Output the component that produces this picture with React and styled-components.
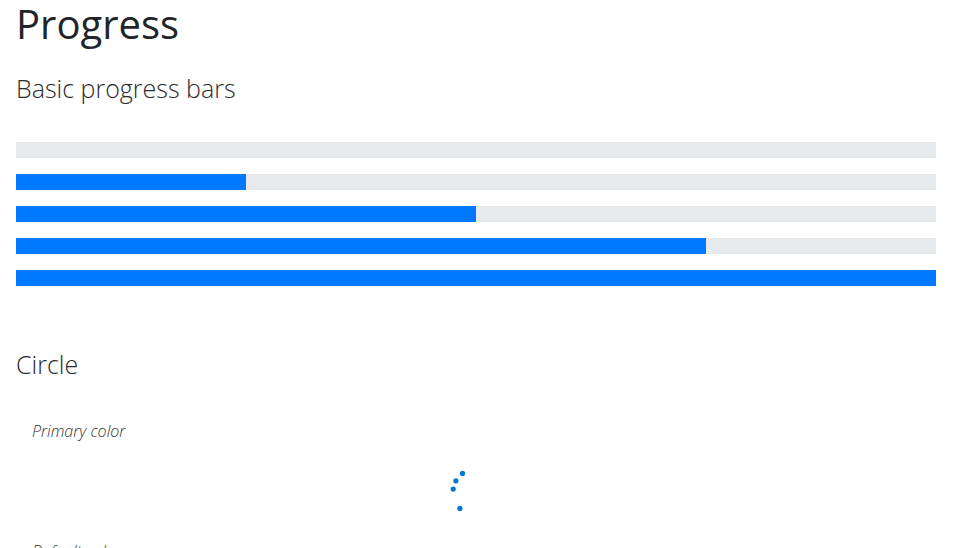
import styled, { createGlobalStyle } from "styled-components";

const GlobalStyle = createGlobalStyle`
  body {
    margin: 0;
    background: #fff;
    font-family: "Open Sans", "Segoe UI", sans-serif;
    color: #212529;
    overflow: hidden;
  }
`;

const Page = styled.div`
  padding: 0 23px 0 16px;
`;

const Title = styled.h1`
  margin: 0;
  font-size: 40px;
  line-height: 48px;
  font-weight: 400;
  color: #212529;
`;

const SectionTitle = styled.h2`
  margin: ${(p) => p.$top}px 0 0;
  font-size: 25px;
  line-height: 32px;
  font-weight: 300;
  color: #2b2b2b;
`;

const BarList = styled.div`
  display: flex;
  flex-direction: column;
  gap: 16px;
  margin-top: 38px;
`;

const Track = styled.div`
  height: 16px;
  background: #e7eaec;
  overflow: hidden;
`;

const Fill = styled.div`
  height: 100%;
  background: #0078ff;
`;

const Demo = styled.div`
  margin-top: 40px;
  padding-left: 16px;
`;

const Label = styled.div`
  font-size: 16px;
  line-height: 22px;
  font-style: italic;
  font-weight: 300;
  color: #333;
`;

const SpinnerRow = styled.div`
  display: flex;
  justify-content: center;
  margin: 24px 0 22px -16px;
`;

function Spinner() {
  const dots = [
    [-13.5, -18.6],
    [-20.1, -11.2],
    [-22.8, -2.9],
    [-16.1, 16.4],
  ];
  return (
    <svg width="52" height="52" viewBox="-26 -26 52 52">
      {dots.map(([x, y], i) => (
        <circle key={i} cx={x} cy={y} r="2.6" fill="#0078d4" />
      ))}
    </svg>
  );
}

export default function App() {
  const values = [0, 25, 50, 75, 100];
  return (
    <Page>
      <GlobalStyle />
      <Title>Progress</Title>
      <SectionTitle $top={24}>Basic progress bars</SectionTitle>
      <BarList>
        {values.map((v) => (
          <Track key={v}>
            <Fill style={{ width: `${v}%` }} />
          </Track>
        ))}
      </BarList>
      <SectionTitle $top={62}>Circle</SectionTitle>
      <Demo>
        <Label>Primary color</Label>
        <SpinnerRow>
          <Spinner />
        </SpinnerRow>
        <Label>Default color</Label>
      </Demo>
    </Page>
  );
}
